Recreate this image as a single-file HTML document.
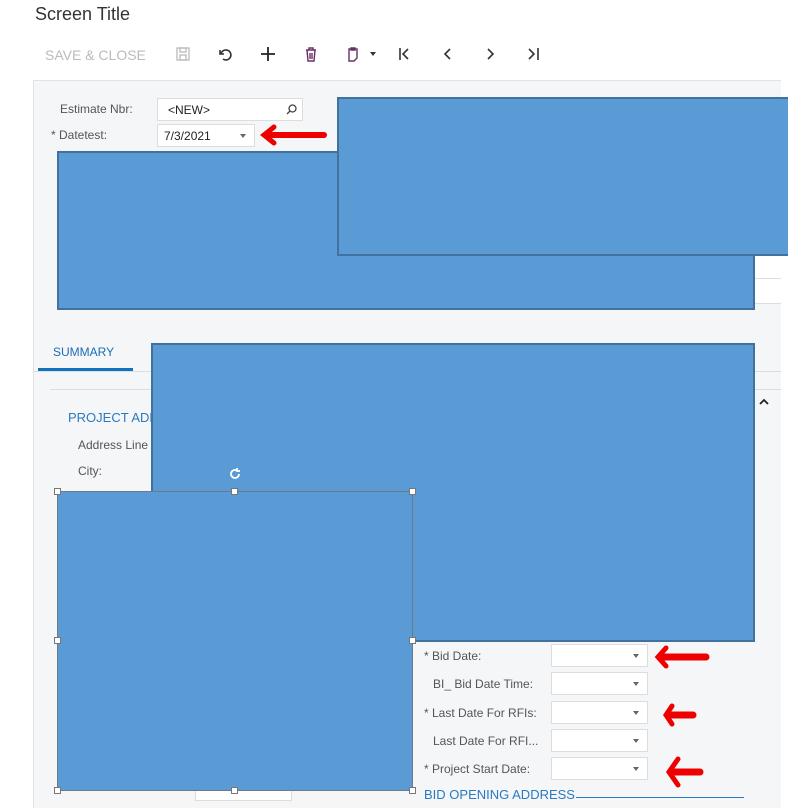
<!DOCTYPE html>
<html><head><meta charset="utf-8"><style>
*{margin:0;padding:0;box-sizing:border-box}
body{width:788px;height:808px;background:#fff;font-family:"Liberation Sans",sans-serif;position:relative;overflow:hidden;color:#333}
.a{position:absolute}
.lbl{font-size:12px;color:#555}
.inp{position:absolute;background:#fff;border:1px solid #ddd;height:23px}
.dd::after{content:"";position:absolute;right:8px;top:9px;border-left:3px solid transparent;border-right:3px solid transparent;border-top:4px solid #666}
.blue{position:absolute;background:#5b9bd5;border:2px solid #41719c}
.h{position:absolute;width:7px;height:7px;background:#fff;border:1px solid #777}
.ic{position:absolute;top:45px}
</style></head><body>
<div class="a" style="left:35px;top:4px;font-size:18px;color:#333">Screen Title</div>
<div class="a" style="left:45px;top:47px;font-size:14px;color:#bbb">SAVE &amp; CLOSE</div>
<svg class="ic" style="left:174px" width="18" height="18" viewBox="0 0 18 18" fill="none" stroke="#bbb" stroke-width="1.3"><rect x="3" y="3" width="12" height="12"/><rect x="6" y="3" width="6" height="4"/><rect x="6" y="10" width="6" height="5"/></svg>
<svg class="ic" style="left:217px" width="18" height="18" viewBox="0 0 18 18" fill="none" stroke="#333" stroke-width="1.6"><path d="M4 9a5 5 0 1 1 2 5"/><path d="M3 5v4h4"/></svg>
<svg class="ic" style="left:259px" width="18" height="18" viewBox="0 0 18 18" stroke="#222" stroke-width="1.8"><path d="M9 2v14M2 9h14"/></svg>
<svg class="ic" style="left:302px" width="18" height="18" viewBox="0 0 18 18" fill="none" stroke="#6a2e6a" stroke-width="1.4"><path d="M4 5h10M7 5V3h4v2M5 5l1 11h6l1-11M8 8v6M10 8v6"/></svg>
<svg class="ic" style="left:344px" width="18" height="18" viewBox="0 0 18 18" fill="none" stroke="#6a2e6a" stroke-width="1.4"><path d="M5 4h8v9l-3 3H5zM7 3h4v2H7z"/></svg>
<div class="a" style="left:370px;top:52px;border-left:3px solid transparent;border-right:3px solid transparent;border-top:4px solid #333"></div>
<svg class="ic" style="left:396px" width="18" height="18" viewBox="0 0 18 18" fill="none" stroke="#333" stroke-width="1.6"><path d="M4 3v12M12 4l-5 5 5 5"/></svg>
<svg class="ic" style="left:439px" width="18" height="18" viewBox="0 0 18 18" fill="none" stroke="#333" stroke-width="1.6"><path d="M11 4l-5 5 5 5"/></svg>
<svg class="ic" style="left:481px" width="18" height="18" viewBox="0 0 18 18" fill="none" stroke="#333" stroke-width="1.6"><path d="M7 4l5 5-5 5"/></svg>
<svg class="ic" style="left:524px" width="18" height="18" viewBox="0 0 18 18" fill="none" stroke="#333" stroke-width="1.6"><path d="M5 4l5 5-5 5M14 3v12"/></svg>

<div class="a" style="left:33px;top:80px;width:748px;height:728px;background:#f5f6f8;border-left:1px solid #e2e2e2;border-top:1px solid #e2e2e2"></div>
<div class="a" style="left:700px;top:256px;width:81px;height:48px;background:#fff;border-bottom:1px solid #ddd"></div>
<div class="a" style="left:700px;top:278px;width:81px;height:1px;background:#ddd"></div>

<div class="a lbl" style="left:60px;top:102px">Estimate Nbr:</div>
<div class="inp" style="left:157px;top:98px;width:146px"><span class="a" style="left:10px;top:4px;font-size:12px;color:#222">&lt;NEW&gt;</span>
<svg class="a" style="right:4px;top:4px" width="13" height="13" viewBox="0 0 13 13" fill="none" stroke="#444" stroke-width="1.3"><circle cx="7.5" cy="5.5" r="3.5"/><path d="M5 8l-3 3"/></svg></div>
<div class="a lbl" style="left:51px;top:128px">* Datetest:</div>
<div class="inp dd" style="left:157px;top:124px;width:98px"><span class="a" style="left:6px;top:4px;font-size:12px;color:#222">7/3/2021</span></div>
<svg class="a" style="left:258px;top:124px" width="72" height="22"><path d="M12 11H66" stroke="#e00" stroke-width="6" stroke-linecap="round"/><path d="M16 3L6 11l10 8" stroke="#e00" stroke-width="5" fill="none" stroke-linecap="round"/></svg>

<div class="a" style="left:53px;top:345px;font-size:12px;color:#1a6fb5">SUMMARY</div>
<div class="a" style="left:38px;top:368px;width:95px;height:3px;background:#0f73c0"></div>
<div class="a" style="left:33px;top:371px;width:748px;height:1px;background:#ddd"></div>
<div class="a" style="left:50px;top:389px;width:731px;height:1px;background:#ddd"></div>
<div class="a" style="left:68px;top:410px;font-size:13px;color:#2a7ac0">PROJECT ADDRESS</div>
<div class="a lbl" style="left:78px;top:438px">Address Line 1:</div>
<div class="a lbl" style="left:78px;top:464px">City:</div>
<svg class="a" style="left:758px;top:397px" width="12" height="10"><path d="M2 7l4-4 4 4" stroke="#222" stroke-width="1.8" fill="none"/></svg>

<div class="a lbl" style="left:424px;top:649px">* Bid Date:</div>
<div class="inp dd" style="left:551px;top:644px;width:97px"></div>
<div class="a lbl" style="left:433px;top:677px">BI_ Bid Date Time:</div>
<div class="inp dd" style="left:551px;top:672px;width:97px"></div>
<div class="a lbl" style="left:424px;top:706px">* Last Date For RFIs:</div>
<div class="inp dd" style="left:551px;top:701px;width:97px"></div>
<div class="a lbl" style="left:433px;top:734px">Last Date For RFI...</div>
<div class="inp dd" style="left:551px;top:729px;width:97px"></div>
<div class="a lbl" style="left:424px;top:762px">* Project Start Date:</div>
<div class="inp dd" style="left:551px;top:757px;width:97px"></div>
<div class="a inp" style="left:195px;top:778px;width:97px"></div>
<div class="a" style="left:424px;top:787px;font-size:13px;color:#2a7ac0">BID OPENING ADDRESS</div>
<div class="a" style="left:576px;top:797px;width:168px;height:1px;background:#2a7ac0"></div>
<svg class="a" style="left:652px;top:644px" width="62" height="26"><path d="M12 13H54" stroke="#e00" stroke-width="7" stroke-linecap="round"/><path d="M14 4L6 13l8 9" stroke="#e00" stroke-width="5" fill="none" stroke-linecap="round"/></svg>
<svg class="a" style="left:660px;top:702px" width="40" height="26"><path d="M10 13H33" stroke="#e00" stroke-width="7" stroke-linecap="round"/><path d="M12 4L6 13l6 9" stroke="#e00" stroke-width="5" fill="none" stroke-linecap="round"/></svg>
<svg class="a" style="left:662px;top:754px" width="44" height="36"><path d="M10 18H38" stroke="#e00" stroke-width="7" stroke-linecap="round"/><path d="M16 5L7 18l9 13" stroke="#e00" stroke-width="5" fill="none" stroke-linecap="round"/></svg>

<div class="blue" style="left:57px;top:151px;width:698px;height:159px"></div>
<div class="blue" style="left:337px;top:97px;width:453px;height:159px"></div>
<div class="blue" style="left:151px;top:343px;width:604px;height:299px"></div>
<div class="blue" style="left:57px;top:491px;width:356px;height:300px;border:1px solid #6a7a8a"></div>
<div class="h" style="left:54px;top:488px"></div><div class="h" style="left:231px;top:488px"></div><div class="h" style="left:409px;top:488px"></div>
<div class="h" style="left:54px;top:637px"></div><div class="h" style="left:409px;top:637px"></div>
<div class="h" style="left:54px;top:787px"></div><div class="h" style="left:231px;top:787px"></div><div class="h" style="left:409px;top:787px"></div>
<svg class="a" style="left:228px;top:467px" width="14" height="14" viewBox="0 0 14 14" fill="none" stroke="#fff" stroke-width="1.8"><path d="M11 7a4 4 0 1 1-2-3.5"/><path d="M9 1v3h3"/></svg>
</body></html>
